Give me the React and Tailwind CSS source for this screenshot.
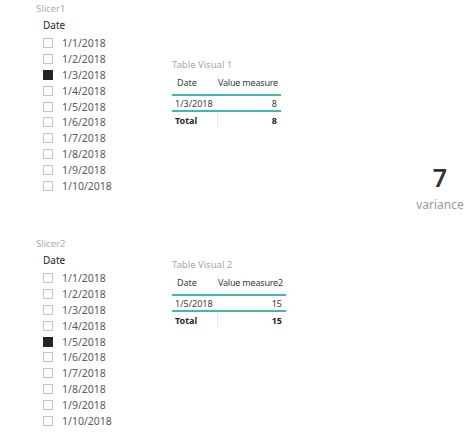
import React from 'react';

const dates = ['1/1/2018', '1/2/2018', '1/3/2018', '1/4/2018', '1/5/2018', '1/6/2018', '1/7/2018', '1/8/2018', '1/9/2018', '1/10/2018'];

const Slicer = ({ title, selected }) => (
  <div className="flex w-[172px] shrink-0 flex-col">
    <div className="ml-[36px] mt-[2px] h-[14px] text-[9.5px] leading-[14px] text-[#ababab]">{title}</div>
    <div className="ml-[43px] mt-[1px] h-[16px] text-[10px] leading-[16px] text-[#252525]">Date</div>
    <div className="ml-[43px] mt-[2px]">
      {dates.map((d) => (
        <div key={d} className="flex h-[15.9px] items-center gap-[9px]">
          <span
            className={
              d === selected
                ? 'h-[10px] w-[10px] border border-[#252525] bg-[#252525]'
                : 'h-[10px] w-[10px] border border-[#c4c4c4] bg-white'
            }
          />
          <span className="text-[10.5px] leading-[16px] text-[#5a5a5a]">{d}</span>
        </div>
      ))}
    </div>
  </div>
);

const TableVisual = ({ title, header, date, value, className }) => (
  <div className={className}>
    <div className="h-[14px] text-[9.5px] leading-[14px] text-[#a8a8a8]">{title}</div>
    <table className="border-collapse text-[9px] text-[#3a3a3a]">
      <tbody>
        <tr className="h-[23px] border-b-2 border-[#41b9ad]">
          <td className="w-[45px] pl-[5px]">Date</td>
          <td className="whitespace-nowrap pl-[1px] pr-[3px] tracking-[-0.2px]">{header}</td>
        </tr>
        <tr className="h-[16px] border-b-2 border-[#41b9ad] leading-[12px]">
          <td className="pl-[3px] pt-[2px]">{date}</td>
          <td className="pr-[4px] pt-[2px] text-right">{value}</td>
        </tr>
        <tr className="h-[17px] font-bold text-[#252525]">
          <td className="border-r border-[#ededed] pl-[3px] pt-[1px]">Total</td>
          <td className="pr-[4px] pt-[1px] text-right">{value}</td>
        </tr>
      </tbody>
    </table>
  </div>
);

export default function App() {
  return (
    <div className="flex h-[439px] w-[474px] overflow-hidden bg-white font-['Noto_Sans',sans-serif]">
      <div className="flex w-[410px] flex-col">
        <div className="flex h-[235px]">
          <Slicer title="Slicer1" selected="1/3/2018" />
          <TableVisual className="mt-[58px]" title="Table Visual 1" header="Value measure" date="1/3/2018" value="8" />
        </div>
        <div className="flex">
          <Slicer title="Slicer2" selected="1/5/2018" />
          <TableVisual className="mt-[23px]" title="Table Visual 2" header="Value measure2" date="1/5/2018" value="15" />
        </div>
      </div>
      <div className="mt-[162px] flex w-[60px] flex-col items-center">
        <div className="h-[30px] text-[25px] font-semibold leading-[30px] text-[#333333]">7</div>
        <div className="mt-[5px] text-[12px] leading-[16px] text-[#9a9a9a]">variance</div>
      </div>
    </div>
  );
}
